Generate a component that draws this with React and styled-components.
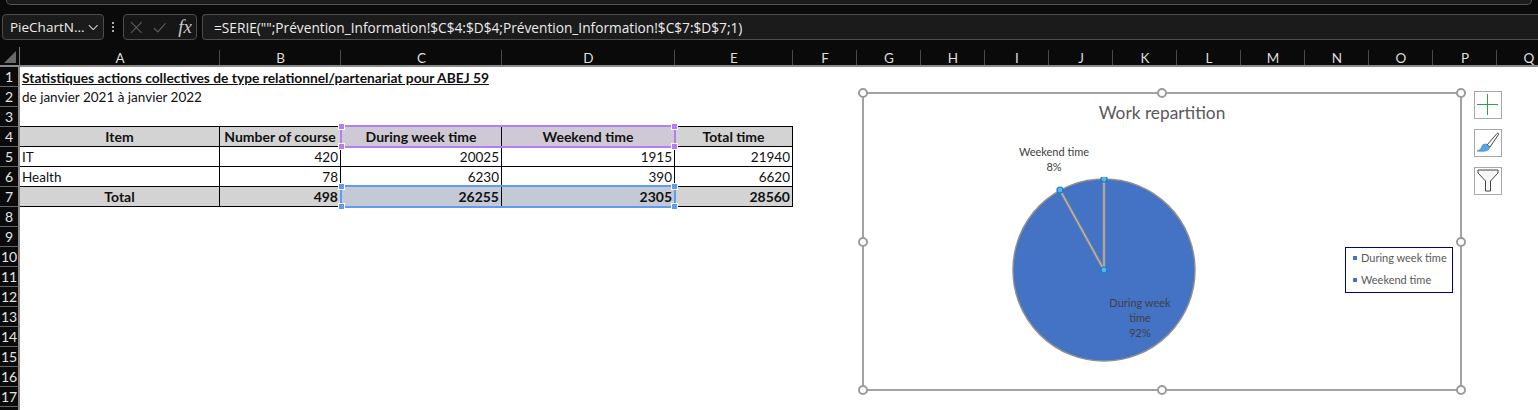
import React from 'react'
import styled, { createGlobalStyle } from 'styled-components'
import { ChevronDown } from 'lucide-react'

const Global = createGlobalStyle`
    html, body {
        margin: 0;
        height: 100%;
        background: #0a0a0a;
        overflow: hidden;
    }
    #root { height: 100%; }
`

const Page = styled.div`
    width: 1538px;
    height: 410px;
    overflow: hidden;
    background: #0a0a0a;
`

const TopStrip = styled.div`
    height: 4px;
    margin: 0 6px;
    background: #1c1c1c;
    border: 1px solid #555;
    border-top: 0;
    border-radius: 0 0 6px 6px;
`

const FormulaBar = styled.div`
    display: flex;
    align-items: center;
    height: 26px;
    margin: 9px 0 7px 2px;
    color: #ececec;
    font-family: "Open Sans", sans-serif;
    font-size: 13.5px;
`

const NameBox = styled.div`
    display: flex;
    align-items: center;
    justify-content: space-between;
    box-sizing: border-box;
    width: 102px;
    height: 100%;
    padding: 0 2px 0 7px;
    background: #1b1b1b;
    border: 1px solid #4d4d4d;
    border-radius: 4px;
    svg { color: #d0d0d0; }
`

const Dots = styled.div`
    display: flex;
    flex-direction: column;
    gap: 2px;
    margin: 0 9px 0 8px;
    i {
        width: 2px;
        height: 2px;
        background: #aaa;
    }
`

const FnBox = styled.div`
    display: flex;
    align-items: center;
    box-sizing: border-box;
    width: 74px;
    height: 100%;
    padding: 0 4px 0 6px;
    background: #161616;
    border: 1px solid #4d4d4d;
    border-radius: 4px;
    gap: 10px;
`

const Fx = styled.span`
    margin-left: 2px;
    color: #c8c8c8;
    font-family: "Liberation Serif", serif;
    font-style: italic;
    font-size: 19px;
`

const FormulaInput = styled.div`
    flex: 1;
    display: flex;
    align-items: center;
    height: 100%;
    box-sizing: border-box;
    margin-left: 5px;
    padding-left: 11px;
    background: #1b1b1b;
    border: 1px solid #4d4d4d;
    border-right: 0;
    border-radius: 4px 0 0 4px;
    white-space: nowrap;
    font-size: 13.7px;
`

const Sheet = styled.div`
    position: relative;
    display: grid;
    grid-template-columns: 20px 200px 121px 161px 173px 118px repeat(12, 64px);
    grid-auto-rows: 20px;
    background: #fff;
    font-family: Lato, sans-serif;
    font-size: 13.5px;
    color: #111;
`

const Corner = styled.div`
    position: relative;
    box-sizing: border-box;
    background: #0a0a0a;
    border-right: 1px solid #777;
    border-bottom: 2px solid #8a8a8a;
    &::after {
        content: "";
        position: absolute;
        right: 3px;
        bottom: 2px;
        border-style: solid;
        border-width: 0 0 12px 12px;
        border-color: transparent transparent #6a6a6a transparent;
    }
`

const ColHead = styled.div`
    position: relative;
    display: flex;
    align-items: center;
    justify-content: center;
    box-sizing: border-box;
    padding-top: 3px;
    color: #dcdcdc;
    background: #0a0a0a;
    border-bottom: 2px solid #8a8a8a;
    font-size: 13.5px;
    &::after {
        content: "";
        position: absolute;
        right: 0;
        top: 3px;
        bottom: 0;
        width: 1px;
        background: #4a4a4a;
    }
`

const RowHead = styled.div`
    display: flex;
    align-items: center;
    justify-content: center;
    box-sizing: border-box;
    color: #e4e4e4;
    background: #0a0a0a;
    border-right: 2px solid #8a8a8a;
    border-bottom: 1px solid #666;
    font-size: 14px;
`

const Cell = styled.div`
    display: flex;
    align-items: center;
    justify-content: ${p => p.$align || 'flex-start'};
    box-sizing: border-box;
    padding: 0 2px;
    background: ${p => p.$fill || 'transparent'};
    font-size: ${p => (p.$under ? '13.8px' : p.$bold ? '14px' : '13.5px')};
    font-weight: ${p => (p.$bold ? 700 : 400)};
    text-decoration: ${p => (p.$under ? 'underline' : 'none')};
    white-space: nowrap;
    border-right: ${p => (p.$lined ? '1px solid #000' : '0')};
    border-bottom: ${p => (p.$lined || p.$capped ? '1px solid #000' : '0')};
`

const Selection = styled.div`
    position: absolute;
    left: 340px;
    top: ${p => p.$top}px;
    box-sizing: border-box;
    width: 336px;
    height: 23px;
    border: 2px solid ${p => p.$color};
    pointer-events: none;
`

const SelHandle = styled.i`
    position: absolute;
    box-sizing: border-box;
    width: 7px;
    height: 7px;
    background: ${p => p.$color};
    border: 1px solid #fff;
    ${p => (p.$right ? 'right: -4px;' : 'left: -4px;')}
    ${p => (p.$bottom ? 'bottom: -4px;' : 'top: -4px;')}
`

const Chart = styled.div`
    position: absolute;
    left: 862px;
    top: 45px;
    box-sizing: border-box;
    width: 600px;
    height: 299px;
    background: #fff;
    border: 2px solid #a2a2a2;
    font-family: Lato, sans-serif;
    color: #595959;
`

// the percentages are taken from the padding box, so shift them onto the middle of the 2px border
const Knob = styled.i`
    position: absolute;
    left: calc(${p => p.$x}% + ${p => p.$x / 50 - 1}px);
    top: calc(${p => p.$y}% + ${p => p.$y / 50 - 1}px);
    box-sizing: border-box;
    width: 10px;
    height: 10px;
    margin: -5px 0 0 -5px;
    background: #fff;
    border: 2px solid #9b9b9b;
    border-radius: 50%;
`

const ChartTitle = styled.div`
    margin-top: 8px;
    text-align: center;
    font-size: 17.3px;
    line-height: 22px;
`

const PieBox = styled.svg`
    position: absolute;
    left: 147px;
    top: 83px;
`

const SliceLabel = styled.div`
    position: absolute;
    left: ${p => p.$x}px;
    top: ${p => p.$y}px;
    width: 90px;
    margin-left: -45px;
    text-align: center;
    font-size: 11px;
    line-height: 15px;
    color: #404040;
`

const Legend = styled.div`
    position: absolute;
    left: 481px;
    top: 153px;
    box-sizing: border-box;
    display: flex;
    flex-direction: column;
    justify-content: center;
    gap: 6px;
    width: 108px;
    height: 46px;
    padding: 0 0 2px 7px;
    border: 1.5px solid #00008b;
    font-size: 11px;
`

const LegendItem = styled.div`
    display: flex;
    align-items: center;
    gap: 4px;
    line-height: 16px;
    i {
        width: 4px;
        height: 4px;
        background: #4472c4;
    }
`

const ChartTools = styled.div`
    position: absolute;
    left: 1474px;
    top: 44px;
    display: flex;
    flex-direction: column;
    gap: 10px;
`

const ToolButton = styled.div`
    box-sizing: border-box;
    width: 28px;
    height: 28px;
    background: #fff;
    border: 1.5px solid #a8a8a8;
    display: flex;
    align-items: center;
    justify-content: center;
`

const columns = ['A', 'B', 'C', 'D', 'E', 'F', 'G', 'H', 'I', 'J', 'K', 'L', 'M', 'N', 'O', 'P', 'Q']
const grey = '#d3d3d3'

const tableRows = {
    4: {
        bold: true,
        values: [
            ['Item', 'center', grey],
            ['Number of course', 'center', grey],
            ['During week time', 'center', '#cfc9d5'],
            ['Weekend time', 'center', '#cfc9d5'],
            ['Total time', 'center', grey],
        ],
    },
    5: {
        values: [
            ['IT'],
            ['420', 'flex-end'],
            ['20025', 'flex-end'],
            ['1915', 'flex-end'],
            ['21940', 'flex-end'],
        ],
    },
    6: {
        values: [
            ['Health'],
            ['78', 'flex-end'],
            ['6230', 'flex-end'],
            ['390', 'flex-end'],
            ['6620', 'flex-end'],
        ],
    },
    7: {
        bold: true,
        values: [
            ['Total', 'center', grey],
            ['498', 'flex-end', grey],
            ['26255', 'flex-end', '#c3cad6'],
            ['2305', 'flex-end', '#c3cad6'],
            ['28560', 'flex-end', grey],
        ],
    },
}

function renderRow(n) {
    const row = tableRows[n]
    return columns.map((col, i) => {
        const key = `${col}${n}`
        if (row && row.values[i]) {
            const [text, align, fill] = row.values[i]
            return <Cell key={key} $lined $bold={row.bold} $align={align} $fill={fill}>{text}</Cell>
        }
        if (n === 1 && i === 0) {
            return <Cell key={key} $bold $under>Statistiques actions collectives de type relationnel/partenariat pour ABEJ 59</Cell>
        }
        if (n === 2 && i === 0) {
            return <Cell key={key}>de janvier 2021 à janvier 2022</Cell>
        }
        return <Cell key={key} $capped={n === 3 && i < 5} />
    })
}

const knobs = [[0, 0], [50, 0], [100, 0], [0, 50], [100, 50], [0, 100], [50, 100], [100, 100]]

function SliceDot({ cx, cy }) {
    return <circle cx={cx} cy={cy} r="3" fill="#5ab4ec" stroke="#0f7fcf" strokeWidth="1.2" />
}

function Pie() {
    // centre 93,93 radius 91, weekend slice is 8.07% of the circle
    return (
        <PieBox width="186" height="186" viewBox="0 0 186 186">
            <circle cx="93" cy="93" r="91" fill="#4472c4" stroke="#8f8f8f" strokeWidth="1.5" />
            <path d="M93 93 L93 2 M93 93 L49 13" stroke="#8a8a8a" strokeWidth="3" fill="none" />
            <path d="M93 93 L93 2 M93 93 L49 13" stroke="#c4c4c4" strokeWidth="1" fill="none" />
            <SliceDot cx="93" cy="2" />
            <SliceDot cx="49" cy="13" />
            <SliceDot cx="93" cy="93" />
        </PieBox>
    )
}

export default function App() {
    return (
        <Page>
            <Global />
            <TopStrip />
            <FormulaBar>
                <NameBox>PieChartN...<ChevronDown size={17} strokeWidth={1.5} /></NameBox>
                <Dots><i /><i /><i /></Dots>
                <FnBox>
                    <svg width="13" height="13" viewBox="0 0 13 13">
                        <path d="M1 1 L12 12 M12 1 L1 12" stroke="#5c5c5c" strokeWidth="1.2" />
                    </svg>
                    <svg width="14" height="11" viewBox="0 0 14 11">
                        <path d="M1 6 L5 10 L13 1" stroke="#5c5c5c" strokeWidth="1.2" fill="none" />
                    </svg>
                    <Fx>fx</Fx>
                </FnBox>
                <FormulaInput>=SERIE("";Prévention_Information!$C$4:$D$4;Prévention_Information!$C$7:$D$7;1)</FormulaInput>
            </FormulaBar>
            <Sheet>
                <Corner />
                {columns.map(col => <ColHead key={col}>{col}</ColHead>)}
                {Array.from({ length: 18 }, (_, i) => i + 1).map(n => (
                    <React.Fragment key={n}>
                        <RowHead>{n < 18 ? n : null}</RowHead>
                        {renderRow(n)}
                    </React.Fragment>
                ))}

                <Selection $top={78} $color="#b27ff0">
                    <SelHandle $color="#b27ff0" />
                    <SelHandle $color="#b27ff0" $right />
                    <SelHandle $color="#b27ff0" $bottom />
                    <SelHandle $color="#b27ff0" $right $bottom />
                </Selection>
                <Selection $top={138} $color="#5f9bf5">
                    <SelHandle $color="#5f9bf5" />
                    <SelHandle $color="#5f9bf5" $right />
                    <SelHandle $color="#5f9bf5" $bottom />
                    <SelHandle $color="#5f9bf5" $right $bottom />
                </Selection>

                <Chart>
                    <ChartTitle>Work repartition</ChartTitle>
                    <Pie />
                    <SliceLabel $x={190} $y={50}>Weekend time<br />8%</SliceLabel>
                    <SliceLabel $x={276} $y={201}>During week<br />time<br />92%</SliceLabel>
                    <Legend>
                        <LegendItem><i />During week time</LegendItem>
                        <LegendItem><i />Weekend time</LegendItem>
                    </Legend>
                    {knobs.map(([x, y]) => <Knob key={`${x}-${y}`} $x={x} $y={y} />)}
                </Chart>

                <ChartTools>
                    <ToolButton>
                        <svg width="22" height="22" viewBox="0 0 22 22">
                            <path d="M0 10.5 H21 M10.5 0 V21" stroke="#2f9e4f" strokeWidth="1" />
                        </svg>
                    </ToolButton>
                    <ToolButton>
                        <svg width="24" height="24" viewBox="0 0 24 24">
                            <path d="M11 14 L21 2.5 C22 1.5 23 2.5 22.5 3.5 L14 16 Z" fill="#fff" stroke="#444" strokeWidth="1" />
                            <path d="M10 13 L14 16 C13 20 9 21 1 20 C4 19 5 18 6 15 C7 13 9 13 10 13 Z" fill="#57a3e6" stroke="#2a7cc7" strokeWidth="0.6" />
                        </svg>
                    </ToolButton>
                    <ToolButton>
                        <svg width="24" height="24" viewBox="0 0 24 24">
                            <path d="M2 1 H22 V4 L14.5 12 V22 H9.5 V12 L2 4 Z" fill="#f6f6f6" stroke="#444" strokeWidth="1" />
                        </svg>
                    </ToolButton>
                </ChartTools>
            </Sheet>
        </Page>
    )
}
